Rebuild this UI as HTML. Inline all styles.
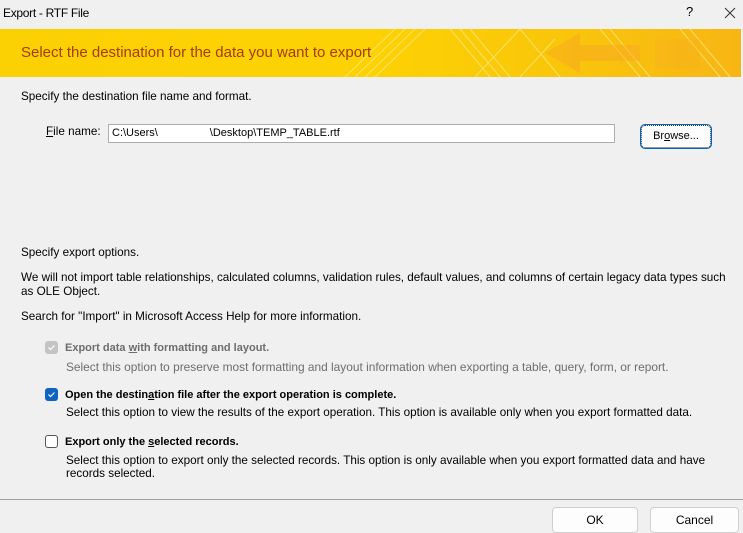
<!DOCTYPE html>
<html><head><meta charset="utf-8"><style>
*{margin:0;padding:0;box-sizing:border-box}
body{width:743px;height:531px;background:#f0f0f0;font-family:"Liberation Sans",sans-serif;font-size:11.7px;color:#000;position:relative;overflow:hidden}
.a{position:absolute;white-space:nowrap}
.g{color:#6d6d6d}
.cb{position:absolute;width:13px;height:13px;border-radius:3px}
.btn{position:absolute;background:#fdfdfd;border:1px solid #d0d0d0;border-radius:4px;text-align:center;font-size:12px}
</style></head><body>
<div class="a" style="left:3px;top:6px;font-size:12px;letter-spacing:-0.3px">Export - RTF File</div>
<div class="a" style="left:686px;top:4px;font-size:13px">?</div>
<svg class="a" style="left:724px;top:7px" width="12" height="12"><path d="M1 1L11 11M11 1L1 11" stroke="#333" stroke-width="1"/></svg>
<div style="position:absolute;left:0;top:29px;width:741px;height:48px;background:linear-gradient(90deg,#fcd104 0%,#fcd204 50%,#f9c60a 75%,#f8b615 100%);overflow:hidden">
<svg width="741" height="48" style="position:absolute;left:0;top:0">
<g stroke="#fde77a" stroke-width="1.2" fill="none" opacity=".7">
<path d="M345 48 L395 0 M355 48 L405 0 M365 48 L415 0 M375 48 L425 0"/>
<path d="M450 0 L490 48 M460 0 L500 48 M470 0 L510 48"/>
<path d="M475 48 L520 0 L560 48 M520 48 L555 10"/>
<path d="M600 0 L640 48 M610 0 L650 48 M680 0 L720 48 M690 0 L730 48"/>
</g>
<path d="M545 24 L580 4 L580 16 L640 16 L640 32 L580 32 L580 44 Z" fill="#f6a623" opacity=".45"/>
<path d="M655 10 L700 10 L700 40 L655 40 Z" fill="#f7b020" opacity=".35"/>
</svg>
<div class="a" style="left:21px;top:15px;font-size:15px;color:#a53a0e">Select the destination for the data you want to export</div>
</div>
<div class="a" style="left:21px;top:90px">Specify the destination file name and format.</div>
<div class="a" style="left:46px;top:125px"><u>F</u>ile name:</div>
<div style="position:absolute;left:108px;top:124px;width:507px;height:19px;background:#fff;border:1px solid #adadad"><span class="a" style="left:3px;top:2px;font-size:11px">C:\Users\&nbsp;&nbsp;&nbsp;&nbsp;&nbsp;&nbsp;&nbsp;&nbsp;&nbsp;&nbsp;&nbsp;&nbsp;&nbsp;&nbsp;&nbsp;&nbsp;&nbsp;\Desktop\TEMP_TABLE.rtf</span></div>
<div class="btn" style="left:641px;top:125px;width:70px;height:23px;border:1px dotted #333;box-shadow:0 0 0 1px #0067c0;line-height:21px;font-size:11px">Br<u>o</u>wse...</div>
<div class="a" style="left:21px;top:246px">Specify export options.</div>
<div class="a" style="left:21px;top:271px">We will not import table relationships, calculated columns, validation rules, default values, and columns of certain legacy data types such</div>
<div class="a" style="left:21px;top:285px">as OLE Object.</div>
<div class="a" style="left:21px;top:310px">Search for "Import" in Microsoft Access Help for more information.</div>
<div class="cb" style="left:45px;top:341px;background:#c4c4c4"><svg width="13" height="13"><path d="M3.5 6.5l2 2 4-4" stroke="#fff" stroke-width="1.2" fill="none"/></svg></div>
<div class="a g" style="left:65px;top:342px;font-weight:bold;font-size:11px">Export data <u>w</u>ith formatting and layout.</div>
<div class="a g" style="left:66px;top:360px;font-size:11.9px">Select this option to preserve most formatting and layout information when exporting a table, query, form, or report.</div>
<div class="cb" style="left:45px;top:388px;background:#0f62bf"><svg width="13" height="13"><path d="M3.5 6.5l2 2 4-4" stroke="#fff" stroke-width="1.2" fill="none"/></svg></div>
<div class="a" style="left:65px;top:389px;font-weight:bold;font-size:11px">Open the destin<u>a</u>tion file after the export operation is complete.</div>
<div class="a" style="left:66px;top:406px">Select this option to view the results of the export operation. This option is available only when you export formatted data.</div>
<div class="cb" style="left:45px;top:435px;border:1px solid #555;background:#fff"></div>
<div class="a" style="left:65px;top:436px;font-weight:bold;font-size:11px">Export only the <u>s</u>elected records.</div>
<div class="a" style="left:66px;top:454px">Select this option to export only the selected records. This option is only available when you export formatted data and have</div>
<div class="a" style="left:66px;top:467px">records selected.</div>
<div style="position:absolute;left:0;top:499px;width:743px;height:1px;background:#a0a0a0"></div>
<div class="btn" style="left:552px;top:507px;width:86px;height:26px;line-height:24px">OK</div>
<div class="btn" style="left:650px;top:507px;width:89px;height:26px;line-height:24px">Cancel</div>
</body></html>
